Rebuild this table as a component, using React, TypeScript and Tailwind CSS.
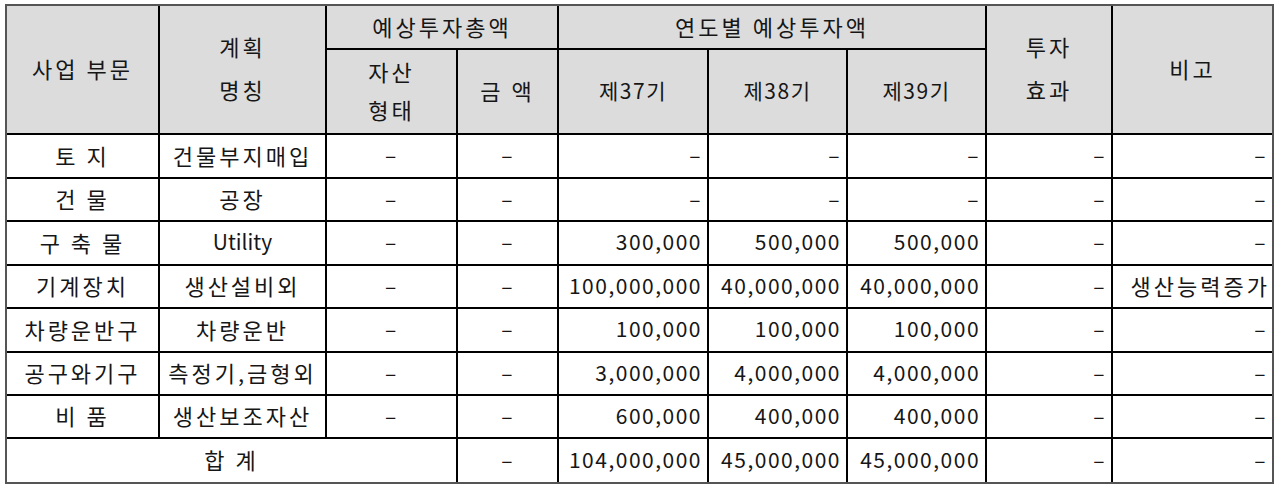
import React from 'react';

type Row = {
  sector: string;
  name: string;
  y37: string;
  y38: string;
  y39: string;
  note: string;
};

const rows: Row[] = [
  { sector: '토 지', name: '건물부지매입', y37: '–', y38: '–', y39: '–', note: '–' },
  { sector: '건 물', name: '공장', y37: '–', y38: '–', y39: '–', note: '–' },
  { sector: '구 축 물', name: 'Utility', y37: '300,000', y38: '500,000', y39: '500,000', note: '–' },
  { sector: '기계장치', name: '생산설비외', y37: '100,000,000', y38: '40,000,000', y39: '40,000,000', note: '생산능력증가' },
  { sector: '차량운반구', name: '차량운반', y37: '100,000', y38: '100,000', y39: '100,000', note: '–' },
  { sector: '공구와기구', name: '측정기,금형외', y37: '3,000,000', y38: '4,000,000', y39: '4,000,000', note: '–' },
  { sector: '비 품', name: '생산보조자산', y37: '600,000', y38: '400,000', y39: '400,000', note: '–' },
];

const rowHeights = ['h-[44px]', 'h-[43px]', 'h-[44px]', 'h-[43px]', 'h-[44px]', 'h-[43px]', 'h-[43px]'];

const cell = 'border-2 border-black px-[5px] pt-0 pb-[3px] align-middle';
const head = `${cell} bg-[#dcdcdc] text-center font-normal`;
// hangul in the source renders a bit larger than the digits
const ko = 'text-[22px] tracking-[3px]';

export default function App() {
  return (
    <div
      className="min-h-screen bg-white pt-[4px] pl-[5px] text-[21px] leading-none tracking-[1.5px] text-[#161616]"
      style={{ fontFamily: '"Noto Sans CJK KR", "Noto Sans", sans-serif' }}
    >
      <div className="w-[1269px] border-2 border-[#555555]">
        <table className="w-[1265px] table-fixed border-collapse border-hidden">
          <colgroup>
            <col className="w-[152px]" />
            <col className="w-[167px]" />
            <col className="w-[131px]" />
            <col className="w-[101px]" />
            <col className="w-[150px]" />
            <col className="w-[139px]" />
            <col className="w-[139px]" />
            <col className="w-[126px]" />
            <col className="w-[160px]" />
          </colgroup>
          <thead>
            <tr className="h-[43px]">
              <th rowSpan={2} className={`${head} ${ko}`}>사업 부문</th>
              <th rowSpan={2} className={`${head} ${ko} leading-[43px]`}>
                계획
                <br />
                명칭
              </th>
              <th colSpan={2} className={`${head} ${ko}`}>예상투자총액</th>
              <th colSpan={3} className={`${head} ${ko}`}>연도별 예상투자액</th>
              <th rowSpan={2} className={`${head} ${ko} leading-[43px]`}>
                투자
                <br />
                효과
              </th>
              <th rowSpan={2} className={`${head} ${ko}`}>비고</th>
            </tr>
            <tr className="h-[85px]">
              <th className={`${head} ${ko} leading-[38px]`}>
                자산
                <br />
                형태
              </th>
              <th className={`${head} ${ko}`}>금 액</th>
              <th className={head}>제37기</th>
              <th className={head}>제38기</th>
              <th className={head}>제39기</th>
            </tr>
          </thead>
          <tbody>
            {rows.map((r, i) => (
              <tr key={r.sector} className={rowHeights[i]}>
                <td className={`${cell} ${ko} text-center`}>{r.sector}</td>
                <td className={`${cell} text-center ${r.name === 'Utility' ? 'tracking-normal' : ko}`}>{r.name}</td>
                <td className={`${cell} text-center`}>–</td>
                <td className={`${cell} text-center`}>–</td>
                <td className={`${cell} text-right`}>{r.y37}</td>
                <td className={`${cell} text-right`}>{r.y38}</td>
                <td className={`${cell} text-right`}>{r.y39}</td>
                <td className={`${cell} text-right`}>–</td>
                <td className={`${cell} text-right ${r.note === '–' ? '' : `${ko} pr-[2px]`}`}>{r.note}</td>
              </tr>
            ))}
            <tr className="h-[44px]">
              <td colSpan={3} className={`${cell} ${ko} text-center`}>합 계</td>
              <td className={`${cell} text-center`}>–</td>
              <td className={`${cell} text-right`}>104,000,000</td>
              <td className={`${cell} text-right`}>45,000,000</td>
              <td className={`${cell} text-right`}>45,000,000</td>
              <td className={`${cell} text-right`}>–</td>
              <td className={`${cell} text-right`}>–</td>
            </tr>
          </tbody>
        </table>
      </div>
    </div>
  );
}
